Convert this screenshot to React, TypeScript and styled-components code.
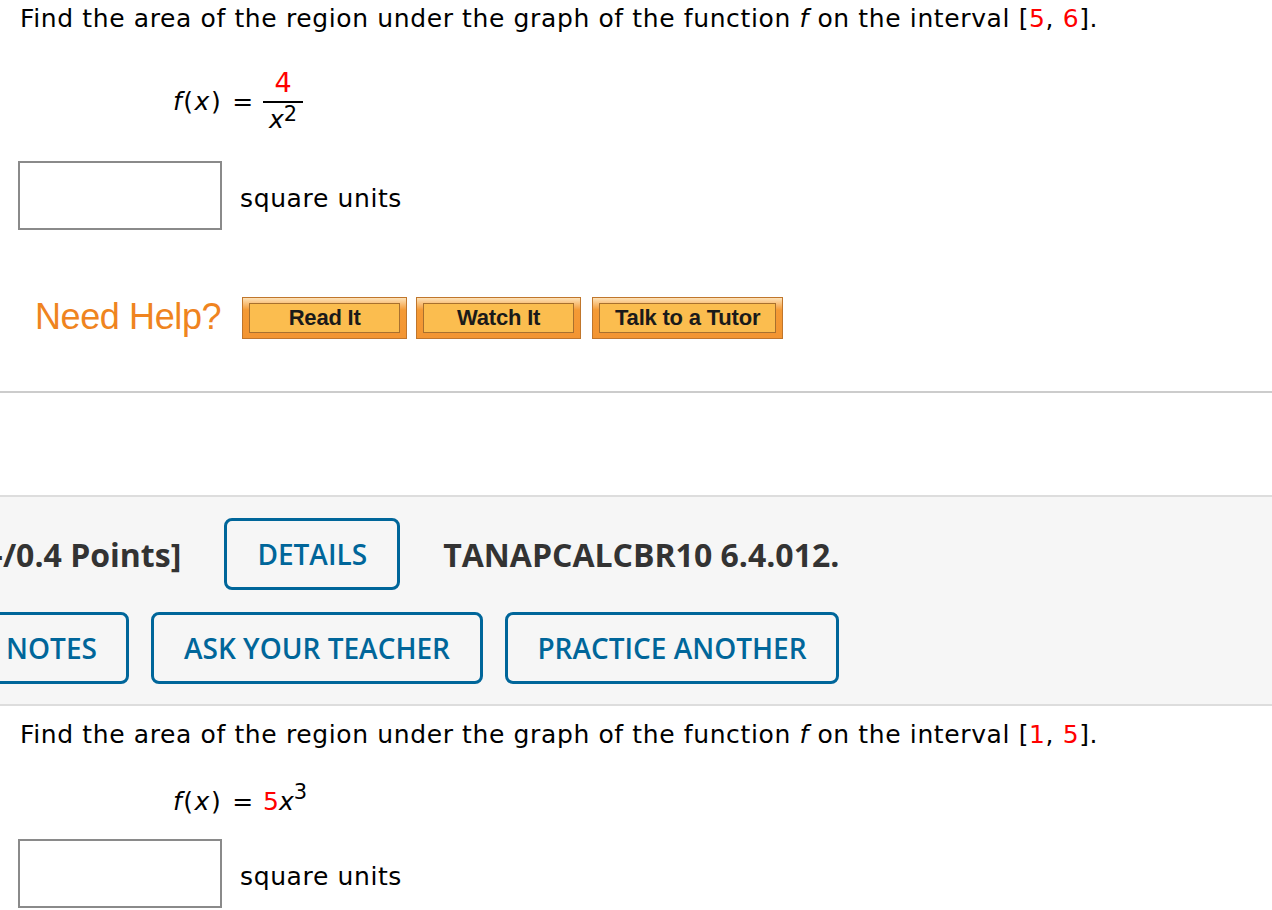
import React from 'react';
import styled, { createGlobalStyle } from 'styled-components';

const TEXT = '#000000';
const RED = '#ff0000';
const BLUE = '#00669a';
const DARK = '#333333';

const GlobalStyle = createGlobalStyle`
  html, body {
    margin: 0;
    padding: 0;
    background: #ffffff;
  }
  body {
    width: 1272px;
    height: 910px;
    overflow: hidden;
  }
`;

const Page = styled.main`
  width: 1272px;
  overflow: hidden;
  font-family: 'DejaVu Sans', Verdana, sans-serif;
  color: ${TEXT};
`;

const Question = styled.section<{ $top: number }>`
  padding: ${(p) => p.$top}px 0 0 20px;
`;

const Prompt = styled.p`
  margin: 0;
  font-size: 25px;
  line-height: 36px;
  letter-spacing: 0.62px;
  white-space: nowrap;
`;

const Red = styled.span`
  color: ${RED};
`;

const Var = styled.i`
  font-style: italic;
`;

const Formula = styled.div<{ $top: number }>`
  display: flex;
  align-items: center;
  gap: 10px;
  margin: ${(p) => p.$top}px 0 0 153px;
  font-size: 25px;
  line-height: 30px;
`;

const Lhs = styled.span`
  letter-spacing: 1.5px;
`;

const Fraction = styled.span`
  display: flex;
  flex-direction: column;
  align-items: center;
  width: 40px;
`;

const Numerator = styled.span`
  color: ${RED};
  font-size: 27px;
  line-height: 28px;
  padding-bottom: 4px;
`;

const Bar = styled.span`
  display: block;
  width: 40px;
  height: 2px;
  background: ${TEXT};
`;

const Denominator = styled.span`
  line-height: 28px;
  padding-top: 3px;
  white-space: nowrap;
`;

const Sup = styled.sup<{ $lift: number }>`
  position: relative;
  top: -${(p) => p.$lift}px;
  font-size: 21px;
  line-height: 0;
  vertical-align: baseline;
`;

const Power = styled.span`
  white-space: nowrap;
`;

const AnswerRow = styled.div<{ $top: number }>`
  display: flex;
  align-items: center;
  gap: 18px;
  margin: ${(p) => p.$top}px 0 0 -2px;
`;

const AnswerBox = styled.input`
  box-sizing: border-box;
  width: 204px;
  height: 69px;
  border: 2px solid #8a8a8a;
  background: #ffffff;
  outline: none;
  padding: 0;
`;

const Units = styled.span`
  font-size: 25px;
  letter-spacing: 0.62px;
  padding-top: 6px;
`;

const HelpRow = styled.div`
  display: flex;
  align-items: center;
  gap: 9px;
  margin: 66px 0 0 35px;
`;

const HelpLabel = styled.span`
  font-family: 'Liberation Sans', Arial, sans-serif;
  font-size: 36px;
  line-height: 42px;
  letter-spacing: -0.4px;
  color: #ef8420;
  margin-right: 12px;
  padding-bottom: 2px;
`;

const HelpButton = styled.button<{ $width: number; $space?: number }>`
  box-sizing: border-box;
  width: ${(p) => p.$width}px;
  height: 42px;
  margin-left: ${(p) => p.$space ?? 0}px;
  padding: 5px 6px;
  border: 1px solid #c0762c;
  background: linear-gradient(#fde2b8, #f49a35 30%, #f39532);
  cursor: pointer;
`;

const HelpInner = styled.span`
  display: flex;
  align-items: center;
  justify-content: center;
  height: 100%;
  box-sizing: border-box;
  border: 1px solid #a8702e;
  background: #fbbd4f;
  font-family: 'Liberation Sans', Arial, sans-serif;
  font-weight: 700;
  font-size: 22px;
  letter-spacing: -0.2px;
  color: #1a1a1a;
`;

const Rule = styled.hr`
  margin: 51px 0 0;
  border: 0;
  height: 2px;
  background: #cccccc;
`;

const Band = styled.section`
  margin-top: 102px;
  background: #f6f6f6;
  border-top: 2px solid #dddddd;
  border-bottom: 2px solid #dddddd;
  padding: 21px 0 20px;
  font-family: 'Open Sans', sans-serif;
  overflow: hidden;
`;

const BandRow = styled.div<{ $shift: number; $gap: number; $top?: number }>`
  display: flex;
  align-items: center;
  gap: ${(p) => p.$gap}px;
  margin-left: ${(p) => p.$shift}px;
  margin-top: ${(p) => p.$top ?? 0}px;
  white-space: nowrap;
`;

const Points = styled.span`
  font-size: 32px;
  font-weight: 700;
  color: ${DARK};
`;

const Code = styled(Points)``;

const OutlineButton = styled.button<{ $width: number }>`
  box-sizing: border-box;
  width: ${(p) => p.$width}px;
  height: 72px;
  border: 3px solid ${BLUE};
  border-radius: 8px;
  background: transparent;
  color: ${BLUE};
  font-family: 'Open Sans', sans-serif;
  font-size: 28px;
  font-weight: 600;
  padding: 0;
  cursor: pointer;
`;

const App = () => (
  <Page>
    <GlobalStyle />
    <Question $top={1}>
      <Prompt>
        Find the area of the region under the graph of the function <Var>f</Var> on the
        interval [<Red>5</Red>, <Red>6</Red>].
      </Prompt>
      <Formula $top={32}>
        <Lhs>
          <Var>f</Var>(<Var>x</Var>)
        </Lhs>
        <span>=</span>
        <Fraction>
          <Numerator>4</Numerator>
          <Bar />
          <Denominator>
            <Var>x</Var>
            <Sup $lift={7}>2</Sup>
          </Denominator>
        </Fraction>
      </Formula>
      <AnswerRow $top={27}>
        <AnswerBox aria-label="answer" />
        <Units>square units</Units>
      </AnswerRow>
    </Question>

    <HelpRow>
      <HelpLabel>Need Help?</HelpLabel>
      <HelpButton $width={165}>
        <HelpInner>Read It</HelpInner>
      </HelpButton>
      <HelpButton $width={165}>
        <HelpInner>Watch It</HelpInner>
      </HelpButton>
      <HelpButton $width={191} $space={2}>
        <HelpInner>Talk to a Tutor</HelpInner>
      </HelpButton>
    </HelpRow>

    <Rule />

    <Band>
      <BandRow $shift={-18} $gap={43}>
        <Points>[-/0.4 Points]</Points>
        <OutlineButton $width={176}>DETAILS</OutlineButton>
        <Code>TANAPCALCBR10 6.4.012.</Code>
      </BandRow>
      <BandRow $shift={-26} $gap={22} $top={22}>
        <OutlineButton $width={155}>NOTES</OutlineButton>
        <OutlineButton $width={332}>ASK YOUR TEACHER</OutlineButton>
        <OutlineButton $width={334}>PRACTICE ANOTHER</OutlineButton>
      </BandRow>
    </Band>

    <Question $top={11}>
      <Prompt>
        Find the area of the region under the graph of the function <Var>f</Var> on the
        interval [<Red>1</Red>, <Red>5</Red>].
      </Prompt>
      <Formula $top={34}>
        <Lhs>
          <Var>f</Var>(<Var>x</Var>)
        </Lhs>
        <span>=</span>
        <Power>
          <Red>5</Red>
          <Var>x</Var>
          <Sup $lift={11}>3</Sup>
        </Power>
      </Formula>
      <AnswerRow $top={22}>
        <AnswerBox aria-label="answer" />
        <Units>square units</Units>
      </AnswerRow>
    </Question>
  </Page>
);

export default App;
